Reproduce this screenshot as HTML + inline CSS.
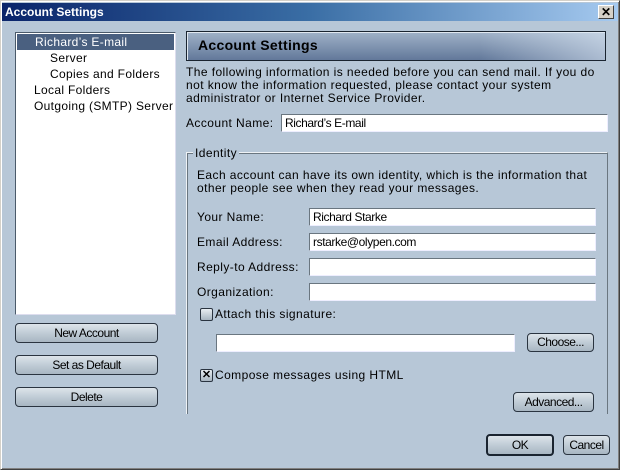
<!DOCTYPE html>
<html><head><style>
*{margin:0;padding:0;box-sizing:border-box}
body{width:620px;height:470px;overflow:hidden;background:#b7c7d7;font-family:"Liberation Sans",sans-serif;font-size:12px;color:#000;position:relative}
.a{position:absolute;white-space:nowrap;letter-spacing:0.42px}
.win{position:absolute;left:0;top:0;width:620px;height:470px;border:1px solid #d4d0c8;border-right-color:#404040;border-bottom-color:#404040;box-shadow:inset 1px 1px 0 #fff,inset -1px -1px 0 #808080}
.title{position:absolute;left:2px;top:3px;width:616px;height:18px;background:linear-gradient(90deg,#0a246a,#3a6ea5 50%,#a6caf0);color:#fff;font-weight:bold;font-size:12px;padding:2px 3px}
.close{position:absolute;left:598px;top:5px;width:16px;height:14px;background:#d4d0c8;border:1px solid #fff;border-right-color:#404040;border-bottom-color:#404040;font-size:12px;font-weight:bold;text-align:center;line-height:12px;color:#000}
.tree{position:absolute;left:15px;top:32px;width:161px;height:283px;background:#fff;border:1px solid #4a5a6a;border-right-color:#dde;border-bottom-color:#dde}
.tree div{position:absolute;height:16px;line-height:16px;font-size:12px;white-space:nowrap;letter-spacing:0.33px}
.btn{position:absolute;border:1px solid #2a3440;border-radius:4px;background:linear-gradient(#dde4ea,#c0ccd6 50%,#a8b6c2);text-align:center;font-size:12px;letter-spacing:-0.5px}
.inp{position:absolute;background:#fff;border:1px solid #6a7680;border-right-color:#eef;border-bottom-color:#eef;font-size:12px;padding-left:3px;line-height:16px;letter-spacing:-0.4px}
.cb{position:absolute;width:13px;height:13px;border:1px solid #2a3440;border-radius:2px;background:linear-gradient(#e8eef2,#a8b6c2);font-size:11px;line-height:11px;text-align:center;font-weight:bold}
</style></head><body>
<div class="win"></div>
<div class="title">Account Settings</div>
<div class="close">✕</div>

<div class="tree">
<div style="left:1px;top:1px;width:157px;background:#4a6080;color:#fff;padding-left:18px">Richard’s E-mail</div>
<div style="left:34px;top:17px">Server</div>
<div style="left:34px;top:33px">Copies and Folders</div>
<div style="left:18px;top:49px">Local Folders</div>
<div style="left:18px;top:65px">Outgoing (SMTP) Server</div>
</div>

<div class="btn" style="left:15px;top:323px;width:143px;height:20px;line-height:18px">New Account</div>
<div class="btn" style="left:15px;top:355px;width:143px;height:20px;line-height:18px">Set as Default</div>
<div class="btn" style="left:15px;top:387px;width:143px;height:20px;line-height:18px">Delete</div>

<div class="a" style="left:186px;top:31px;width:420px;height:30px;border:1px solid #1a2430;box-shadow:inset 1px 1px 0 #e0e8f0;background:linear-gradient(180deg,#a0b2c8,#62789a);"></div>
<div class="a" style="left:186px;top:31px;width:420px;height:30px;background:linear-gradient(90deg,rgba(255,255,255,0) 70%,rgba(220,232,245,.6));border:1px solid #1a2430"></div>
<div class="a" style="left:198px;top:37px;font-weight:bold;font-size:14px;line-height:17px;letter-spacing:0.3px">Account Settings</div>

<div class="a" style="left:186px;top:66px;line-height:13px;font-size:12px">The following information is needed before you can send mail. If you do<br>not know the information requested, please contact your system<br>administrator or Internet Service Provider.</div>

<div class="a" style="left:186px;top:116px">Account Name:</div>
<div class="inp" style="left:281px;top:114px;width:327px;height:18px">Richard’s E-mail</div>

<div class="a" style="left:186px;top:152px;width:422px;height:262px;border:1px solid #eef2f6;border-bottom:none;border-right-color:#6a7680;box-shadow:inset 1px 1px 0 #6a7680"></div>
<div class="a" style="left:193px;top:146px;background:#b7c7d7;padding:0 2px">Identity</div>

<div class="a" style="left:197px;top:169px;line-height:13px">Each account can have its own identity, which is the information that<br>other people see when they read your messages.</div>

<div class="a" style="left:197px;top:210px">Your Name:</div>
<div class="inp" style="left:309px;top:208px;width:287px;height:18px">Richard Starke</div>
<div class="a" style="left:197px;top:235px">Email Address:</div>
<div class="inp" style="left:309px;top:233px;width:287px;height:18px">rstarke@olypen.com</div>
<div class="a" style="left:197px;top:260px">Reply-to Address:</div>
<div class="inp" style="left:309px;top:258px;width:287px;height:18px"></div>
<div class="a" style="left:197px;top:285px">Organization:</div>
<div class="inp" style="left:309px;top:283px;width:287px;height:18px"></div>

<div class="cb" style="left:200px;top:308px"></div>
<div class="a" style="left:215px;top:307px">Attach this signature:</div>
<div class="inp" style="left:216px;top:334px;width:299px;height:18px"></div>
<div class="btn" style="left:527px;top:333px;width:67px;height:19px;line-height:17px">Choose...</div>

<div class="cb" style="left:200px;top:369px">✕</div>
<div class="a" style="left:215px;top:368px">Compose messages using HTML</div>

<div class="btn" style="left:513px;top:392px;width:81px;height:20px;line-height:18px">Advanced...</div>

<div class="btn" style="left:486px;top:434px;width:68px;height:22px;line-height:18px;border:2px solid #1a2430">OK</div>
<div class="btn" style="left:563px;top:435px;width:47px;height:20px;line-height:18px">Cancel</div>
</body></html>
